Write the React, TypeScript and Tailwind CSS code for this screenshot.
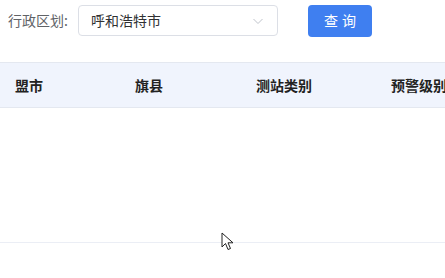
import React from 'react';

const columns = [
  { label: '盟市', w: 'w-[120px]' },
  { label: '旗县', w: 'w-[121px]' },
  { label: '测站类别', w: 'w-[135px]' },
  { label: '预警级别', w: 'w-[120px]' },
];

// Mouse pointer overlay seen in the capture
const Pointer: React.FC = () => (
  <svg width="14" height="20" viewBox="0 0 14 20" className="absolute left-[221px] top-[232px]">
    <path
      d="M1 1 L1 15 L4.5 11.5 L7 17.5 L9.5 16.5 L7 10.8 L12 10.8 Z"
      fill="#fff"
      stroke="#222"
      strokeWidth="1"
      strokeLinejoin="round"
    />
  </svg>
);

export default function App() {
  return (
    <div className="relative w-[445px] h-[278px] overflow-hidden bg-white font-['Noto_Sans_CJK_SC',sans-serif]">
      <div className="flex items-center h-[31px] mt-[5px] pl-[8px]">
        <span className="w-[70px] text-[14px] text-[#606266]">行政区划:</span>
        <div className="flex items-center justify-between w-[200px] h-[31px] border border-[#dcdfe6] rounded-[4px] pl-[12px] pr-[13px]">
          <span className="text-[14px] text-[#303133]">呼和浩特市</span>
          <svg width="12" height="12" viewBox="0 0 12 12">
            <path d="M1.5 4 L6 8.5 L10.5 4" fill="none" stroke="#c0c4cc" strokeWidth="1" />
          </svg>
        </div>
        <button className="ml-[30px] w-[64px] h-[32px] rounded-[4px] bg-[#3f7ff0] text-white text-[14px] tracking-[4px] pl-[4px]">
          查询
        </button>
      </div>
      <div className="mt-[26px] flex h-[46px] items-center bg-[#f0f4fd] border-y border-[#e4e8f0]">
        {columns.map((c) => (
          <div key={c.label} className={`${c.w} shrink-0 pl-[15px] text-[14px] font-bold text-[#222]`}>
            {c.label}
          </div>
        ))}
      </div>
      <div className="h-[135px] border-b border-[#ebeef5]" />
      <Pointer />
    </div>
  );
}
